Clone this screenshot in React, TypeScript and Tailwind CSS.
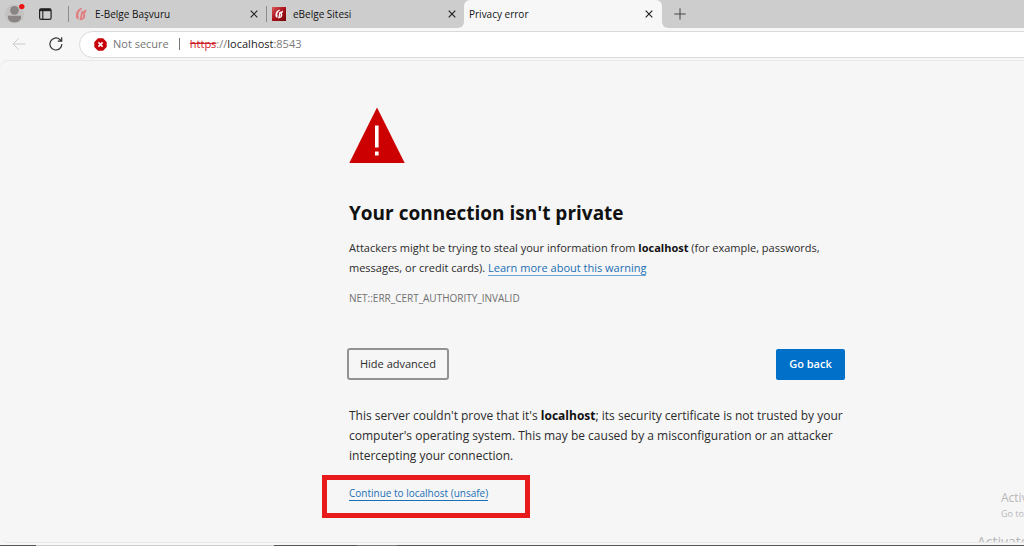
import type { ReactNode } from "react";

function CloseIcon() {
  return (
    <svg viewBox="0 0 8 8" className="size-2" fill="none" stroke="#222" strokeWidth="1.2" aria-hidden="true">
      <path d="M.7.7l6.6 6.6M7.3.7L.7 7.3" />
    </svg>
  );
}

function BrandMark({ color }: { color: string }) {
  return (
    <g fill={color}>
      <path d="M6.500.8C2.600 1.700.3 4.800.3 8.600c0 2.100.8 3.600 2.400 4.200l.7-2.900c-.6-.7-.6-1.700-.4-2.800C3.400 5.200 4.400 3.500 6.100 2.600z" />
      <path
        fillRule="evenodd"
        d="M5.800 4.300L4 13.300c3.600.1 5.600-1.600 5.900-4.200.1-1.100-.2-1.900-.9-2.400 1.400-.9 2-2.500 1.700-4.700C9.600 3.800 8 4.300 5.800 4.300zM7.100 7h.8l-.8 4h-.8z"
      />
    </g>
  );
}

function Tab({ title, icon, className }: { title: string; icon?: ReactNode; className: string }) {
  return (
    <div className={`flex h-full shrink-0 items-center ${className}`}>
      {icon}
      <button type="button" role="tab" className="flex-1 text-left whitespace-nowrap">
        {title}
      </button>
      <button type="button" aria-label={`Close ${title}`} className="flex size-4 items-center justify-center">
        <CloseIcon />
      </button>
    </div>
  );
}

function TabStrip() {
  return (
    <header className="flex h-7 overflow-hidden bg-[#f7f7f7] text-[10px] text-[#111]">
      <div className="flex shrink-0 items-center rounded-br-md bg-[#cdcdcd]">
        <button type="button" aria-label="Profile" className="ml-1 shrink-0">
          <svg viewBox="0 0 22 24" className="h-6 w-[22px]" aria-hidden="true">
            <circle cx="10.500" cy="12" r="9.500" fill="#c4c2c1" />
            <circle cx="10.500" cy="8.300" r="4.400" fill="#888584" />
            <path d="M4 13.800h13v1.700c0 3-3 4.900-6.500 4.900S4 18.500 4 15.500z" fill="#888584" />
            <circle cx="17.800" cy="4.600" r="2.700" fill="#ed1111" />
          </svg>
        </button>
        <button type="button" aria-label="Tab actions" className="ml-3 shrink-0">
          <svg viewBox="0 0 14 14" className="size-3.5" fill="none" stroke="#222" aria-hidden="true">
            <rect x="1.600" y="1.800" width="11.500" height="10.600" rx="1.600" strokeWidth="1.200" />
            <path d="M1.800 3h11.200" strokeWidth="2.400" />
            <path d="M4.800 4v8.400" strokeWidth="1.100" />
          </svg>
        </button>
        <div className="ml-4 h-4 w-px shrink-0 bg-[#8c8c8c]" />
        <Tab
          title="E-Belge Başvuru"
          className="w-[197px] pr-1 pl-1.5"
          icon={
            <svg viewBox="0 0 11 14" className="mr-2 h-3.5 w-3" aria-hidden="true">
              <BrandMark color="#e17f83" />
            </svg>
          }
        />
        <div className="h-4 w-px shrink-0 bg-[#8c8c8c]" />
        <Tab
          title="eBelge Sitesi"
          className="w-[197px] pr-1 pl-[5px]"
          icon={
            <svg viewBox="0 0 14 14" className="mr-[7px] size-3.5" aria-hidden="true">
              <defs>
                <linearGradient id="brandTile" x1="0" y1="0" x2="1" y2="1">
                  <stop offset="0" stopColor="#d95a5e" />
                  <stop offset=".5" stopColor="#aa1018" />
                  <stop offset="1" stopColor="#74070c" />
                </linearGradient>
              </defs>
              <rect width="14" height="14" fill="url(#brandTile)" />
              <g transform="translate(3.200 1.800) scale(.72)">
                <BrandMark color="#fff" />
              </g>
            </svg>
          }
        />
      </div>
      <div className="h-full w-[198px] shrink-0 bg-linear-to-b from-[#cdcdcd] from-50% to-[#f7f7f7] to-50%">
        <div className="h-full rounded-t-md bg-[#f7f7f7]">
          <Tab title="Privacy error" className="pr-[5px] pl-[5px]" />
        </div>
      </div>
      <div className="flex flex-1 items-center rounded-bl-md bg-[#cdcdcd]">
        <button type="button" aria-label="New tab" className="ml-3 shrink-0">
          <svg viewBox="0 0 12 12" className="size-3" stroke="#444" aria-hidden="true">
            <path d="M6 .3v11.400M.3 6h11.400" />
          </svg>
        </button>
      </div>
    </header>
  );
}

function Toolbar() {
  return (
    <nav className="flex h-8 items-center overflow-hidden bg-[#f7f7f7]">
      <button type="button" aria-label="Back" className="ml-3 shrink-0">
        <svg viewBox="0 0 14 14" className="size-3.5" fill="none" stroke="#ccc" aria-hidden="true">
          <path d="M13.500 7H1M6.500 1.500L1 7l5.500 5.500" />
        </svg>
      </button>
      <button type="button" aria-label="Refresh" className="ml-[22px] shrink-0">
        <svg viewBox="0 0 16 16" className="size-4" fill="none" stroke="#333" strokeWidth="1.200" aria-hidden="true">
          <path d="M13.900 8a6 6 0 1 1-2-4.500l1.600 1.500M13.700 1.200V5.100H9.800" />
        </svg>
      </button>
      <div className="-mr-4 ml-[15px] flex h-[27px] flex-1 items-center rounded-full border border-[#dadada] bg-white pl-3.5 text-[11px] whitespace-nowrap">
        <svg viewBox="0 0 13 13" className="mr-1.5 size-[13px] shrink-0" aria-hidden="true">
          <path d="M4 .3h5L12.700 4v5L9 12.700H4L.3 9V4z" fill="#c8000a" />
          <path d="M4.400 4.400l4.200 4.200M8.600 4.400L4.400 8.600" stroke="#fff" strokeWidth="1.500" />
        </svg>
        <span className="text-[#757575]">Not secure</span>
        <span className="mx-2.5 h-3 w-px bg-[#777]" />
        <span className="text-[#7b7b7b]">
          <span className="text-[#d0202a] line-through">https</span>://
          <span className="text-[#1b1b1b]">localhost</span>:8543
        </span>
      </div>
    </nav>
  );
}

export default function App() {
  return (
    <div className="flex min-h-screen flex-col overflow-hidden bg-[#f7f7f7] font-['Open_Sans','Noto_Sans',sans-serif]">
      <TabStrip />
      <Toolbar />
      <main className="relative flex-1 rounded-l-lg border-y border-[#e9e9e9] bg-[#f6f6f6] pb-6 pl-[349px]">
        <div className="w-[496px] pt-[46px] text-[12px] leading-5 text-[#2b2b2b]">
          <svg viewBox="0 0 56 56" className="size-14" role="img" aria-label="Warning">
            <path d="M28 .5L55.700 56H.3z" fill="#c00" />
            <path d="M26 18.500h3.600v22H26zM26 44.500h3.600v4H26z" fill="#fff" />
          </svg>
          <h1 className="mt-9 text-[19px] leading-7 font-bold text-[#111]">Your connection isn't private</h1>
          <p className="mt-[11px] text-[11px] leading-5 whitespace-nowrap">
            Attackers might be trying to steal your information from <b className="text-[#111]">localhost</b> (for example, passwords,
            <br />
            messages, or credit cards).{" "}
            <a href="#learn" className="border-b border-[#6ba6d4] text-[#1a6fb5]">
              Learn more about this warning
            </a>
          </p>
          <p className="mt-2.5 text-[10px] leading-5 text-[#707070]">NET::ERR_CERT_AUTHORITY_INVALID</p>
          <div className="mt-10 flex items-center justify-between text-[11px]">
            <button type="button" className="-ml-0.5 h-8 w-[102px] rounded-[3px] border-2 border-[#929292]">
              Hide advanced
            </button>
            <button type="button" className="h-[31px] w-[69px] rounded-[2px] bg-[#0070c9] font-semibold text-white">
              Go back
            </button>
          </div>
          <p className="mt-[26px] whitespace-nowrap">
            This server couldn't prove that it's <b className="text-[#111]">localhost</b>; its security certificate is not trusted by your
            <br />
            computer's operating system. This may be caused by a misconfiguration or an attacker
            <br />
            intercepting your connection.
          </p>
          <div className="relative mt-[17px] text-[10px]">
            <a href="#continue" className="border-b border-[#1a6fb5] text-[#1a6fb5]">
              Continue to localhost (unsafe)
            </a>
            <div className="pointer-events-none absolute -top-2 -left-[27px] h-[43px] w-[208px] border-[5px] border-[#e81a1c]" />
          </div>
        </div>
        <div className="absolute right-0 bottom-0 h-14 w-[47px] overflow-hidden text-[#b8b8b8]">
          <div className="pt-1 pl-6 whitespace-nowrap">
            <div className="text-[12px] leading-4">Activate Windows</div>
            <div className="text-[9px] leading-4">Go to Settings to activate Windows.</div>
          </div>
          <div className="mt-2.5 text-[14px] leading-5 whitespace-nowrap">Activate Windows</div>
        </div>
      </main>
      <div className="mt-0.5 flex h-px">
        <div className="w-9 bg-[#555]" />
        <div className="w-[238px] bg-[#ccc]" />
        <div className="w-[83px] bg-[#555]" />
        <div className="w-10 bg-[#777]" />
        <div className="flex-1 bg-[#555]" />
      </div>
    </div>
  );
}
